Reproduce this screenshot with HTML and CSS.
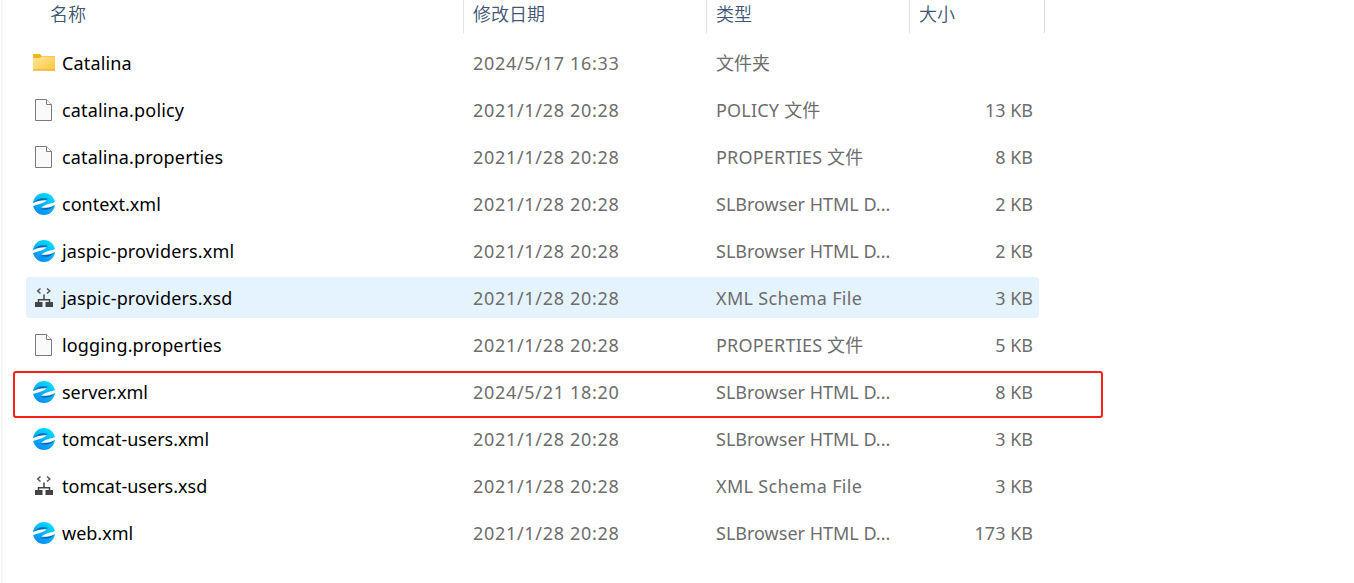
FILE: index.html
```
<!DOCTYPE html>
<html lang="zh-CN">
<head>
<meta charset="utf-8">
<title>conf</title>
<link rel="stylesheet" href="styles.css">
</head>
<body>
<svg class="defs" width="0" height="0">
<defs>
<linearGradient id="fold" x1="0" y1="0" x2="1" y2="1"><stop offset="0" stop-color="#ffe69b"/><stop offset="1" stop-color="#ffc63a"/></linearGradient>
<linearGradient id="disc" x1=".75" y1=".05" x2=".25" y2=".95"><stop offset="0" stop-color="#00dcff"/><stop offset=".5" stop-color="#08b4fb"/><stop offset="1" stop-color="#078cf5"/></linearGradient>
<linearGradient id="shadeA" x1="0" y1="0" x2="1" y2="0"><stop offset="0" stop-color="#0a8ade"/><stop offset=".5" stop-color="#0760b4"/><stop offset="1" stop-color="#0780cf"/></linearGradient>
<symbol id="folder" viewBox="0 0 22 22"><path d="M0 2.5Q0 2 .5 2H7L9 4H22V9H0Z" fill="#f5b51c"/><path d="M0 6H7L8.5 4.5H22V18.5H0Z" fill="url(#fold)"/><path d="M0 18H22" stroke="#e8a323"/></symbol>
<symbol id="file" viewBox="0 0 22 22"><path d="M2.5.5H13.5L18.5 5.5V21.5H2.5Z" fill="#fafafa" stroke="#7b7b7b"/><path d="M13.5.5V5.5H18.5" fill="#fff" stroke="#7b7b7b"/></symbol>
<symbol id="browser" viewBox="0 0 22 22">
<circle cx="11" cy="11" r="11" fill="url(#disc)"/>
<path d="M.8 9C4 5.6 9 4.4 14.5 5.6L14 7.6L4 9.6Z" fill="url(#shadeA)"/>
<path d="M21.2 13C18 16.4 13 17.6 7.5 16.4L8 14.4L18 12.4Z" fill="url(#shadeA)"/>
<path d="M-1 11C3 8 8 6.8 14 7.2C11 9.6 8 10.6 5 11.4C3 12 1 12.4 -1 13.6Z" fill="#fff"/>
<path d="M23 11C19 14 14 15.2 8 14.8C11 12.4 14 11.4 17 10.6C19 10 21 9.6 23 8.4Z" fill="#fff"/>
</symbol>
<symbol id="schema" viewBox="0 0 22 22"><g fill="none" stroke="#555" stroke-width="1.5"><path d="M7.5 1.5L4.7 4L7.5 6.5M14 1.5L16.8 4L14 6.5"/></g><path d="M11 7.5V12.5M5.5 16V12.8H16.5V16" fill="none" stroke="#444" stroke-width="1.5"/><path d="M2 15H9.5V20H2ZM12.5 15H20V20H12.5Z" fill="#444"/></symbol>
</defs>
</svg>
<main class="explorer">
<header class="head"><span class="h-name">名称</span><span>修改日期</span><span>类型</span><span>大小</span></header>
<section class="list">
<div class="row"><svg class="icon"><use href="#folder"/></svg><span class="name">Catalina</span><span class="date">2024/5/17 16:33</span><span class="type">文件夹</span><span class="size"></span></div>
<div class="row"><svg class="icon"><use href="#file"/></svg><span class="name">catalina.policy</span><span class="date">2021/1/28 20:28</span><span class="type wide">POLICY 文件</span><span class="size">13 KB</span></div>
<div class="row"><svg class="icon"><use href="#file"/></svg><span class="name">catalina.properties</span><span class="date">2021/1/28 20:28</span><span class="type wide">PROPERTIES 文件</span><span class="size">8 KB</span></div>
<div class="row"><svg class="icon"><use href="#browser"/></svg><span class="name snug">context.xml</span><span class="date">2021/1/28 20:28</span><span class="type">SLBrowser HTML D...</span><span class="size">2 KB</span></div>
<div class="row"><svg class="icon"><use href="#browser"/></svg><span class="name">jaspic-providers.xml</span><span class="date">2021/1/28 20:28</span><span class="type">SLBrowser HTML D...</span><span class="size">2 KB</span></div>
<div class="row hover"><svg class="icon"><use href="#schema"/></svg><span class="name">jaspic-providers.xsd</span><span class="date">2021/1/28 20:28</span><span class="type wider">XML Schema File</span><span class="size">3 KB</span></div>
<div class="row"><svg class="icon"><use href="#file"/></svg><span class="name">logging.properties</span><span class="date">2021/1/28 20:28</span><span class="type wide">PROPERTIES 文件</span><span class="size">5 KB</span></div>
<div class="row marked"><svg class="icon"><use href="#browser"/></svg><span class="name snug">server.xml</span><span class="date">2024/5/21 18:20</span><span class="type">SLBrowser HTML D...</span><span class="size">8 KB</span></div>
<div class="row"><svg class="icon"><use href="#browser"/></svg><span class="name snug">tomcat-users.xml</span><span class="date">2021/1/28 20:28</span><span class="type">SLBrowser HTML D...</span><span class="size">3 KB</span></div>
<div class="row"><svg class="icon"><use href="#schema"/></svg><span class="name snug">tomcat-users.xsd</span><span class="date">2021/1/28 20:28</span><span class="type wider">XML Schema File</span><span class="size">3 KB</span></div>
<div class="row"><svg class="icon"><use href="#browser"/></svg><span class="name snug">web.xml</span><span class="date">2021/1/28 20:28</span><span class="type">SLBrowser HTML D...</span><span class="size">173 KB</span></div>
</section>
</main>
</body>
</html>
```
FILE: styles.css
```
* { box-sizing: border-box; }
body { margin: 0; background: #fff; overflow: hidden; font-family: "Noto Sans", "Noto Sans CJK SC", sans-serif; font-size: 18px; }
.defs { position: absolute; }
.explorer { height: 583px; margin-left: 1px; border-left: 2px solid #f7f7f7; }
.head { display: grid; grid-template-columns: 461px 243px 203px 135px; height: 33px; font-family: "Noto Sans CJK SC", sans-serif; font-weight: 350; color: #405673; }
.head span { padding-left: 9px; border-right: 1px solid #e2e2e2; line-height: 26px; }
.head .h-name { padding-left: 47px; }
.list { display: grid; gap: 6px; width: 1013px; margin: 9px 0 0 23px; }
.row { position: relative; display: grid; grid-template-columns: 29px 411px 243px 203px 114px; align-items: center; height: 41px; padding-left: 7px; border-radius: 3px; line-height: 39px; white-space: nowrap; color: #6d6d6d; }
.row span { padding-top: 2px; }
.icon { width: 22px; height: 22px; }
.name { color: #000; letter-spacing: .16px; }
.snug { letter-spacing: 0; }
.date { letter-spacing: .69px; }
.wide { letter-spacing: .2px; }
.wider { letter-spacing: .34px; }
.size { text-align: right; }
.hover { background: #e5f3ff; }
.marked::after { content: ""; position: absolute; inset: 0 -64px -6px -13px; border: 2px solid #f91f16; border-radius: 3px; }
```
